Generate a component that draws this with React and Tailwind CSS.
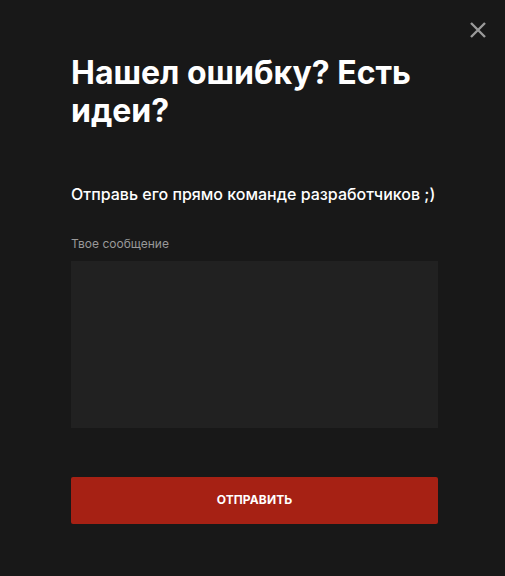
// App.jsx
const CloseIcon = () => (
  <svg width="18" height="18" viewBox="0 0 18 18" fill="none" stroke="#9a9a9a" strokeWidth="2.4" strokeLinecap="butt">
    <path d="M2 2 L16 16 M16 2 L2 16" />
  </svg>
);

const App = () => {
  return (
    <div
      className="relative w-[505px] h-[576px] bg-[#181818] overflow-hidden"
      style={{ fontFamily: 'Inter, "Noto Sans", sans-serif' }}
    >
      <button className="absolute top-[21px] left-[469px] p-0">
        <CloseIcon />
      </button>

      <div className="flex flex-col pl-[71px] pr-[67px] pt-[54px]">
        <h1 className="text-[32px] leading-[38.4px] font-bold text-white pr-6">
          Нашел ошибку? Есть идеи?
        </h1>

        <p className="mt-[51px] text-[16px] leading-6 font-medium text-white whitespace-nowrap">
          Отправь его прямо команде разработчиков ;)
        </p>

        <label className="mt-[30px] text-[12px] leading-4 text-[#999999]">
          Твое сообщение
        </label>

        <textarea className="mt-[9px] h-[167px] w-full resize-none bg-[#212121] border-none outline-none text-white text-sm p-3" />

        <button className="mt-[49px] h-[47px] w-full rounded-[2px] bg-[#a62114] text-white text-[12px] font-bold uppercase tracking-[0.01em]">
          Отправить
        </button>
      </div>
    </div>
  );
};

export default App;
